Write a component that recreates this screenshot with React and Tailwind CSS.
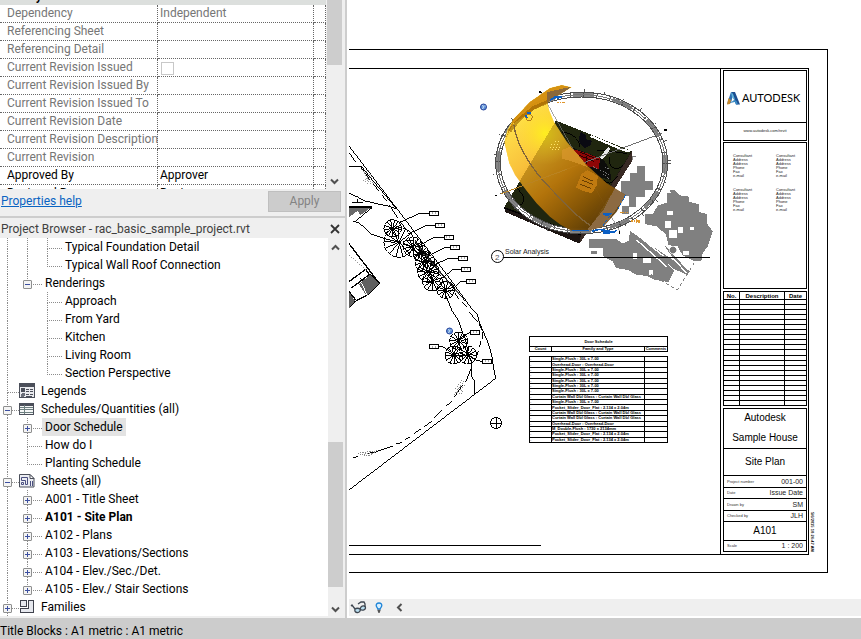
import React from "react";

const properties = [
  { name: "Dependency", value: "Independent" },
  { name: "Referencing Sheet", value: "" },
  { name: "Referencing Detail", value: "" },
  { name: "Current Revision Issued", check: true },
  { name: "Current Revision Issued By", value: "" },
  { name: "Current Revision Issued To", value: "" },
  { name: "Current Revision Date", value: "" },
  { name: "Current Revision Description", value: "" },
  { name: "Current Revision", value: "" },
  { name: "Approved By", value: "Approver", editable: true },
  { name: "Designed By", value: "Designer", editable: true },
];

// Guides, left to right: "v" line passes through, "t" branch, "l" last branch, "" empty.
const tree = [
  { label: "Typical Foundation Detail", guides: ["v", "v", "t"] },
  { label: "Typical Wall Roof Connection", guides: ["v", "v", "l"] },
  { label: "Renderings", guides: ["v", "l"], box: "minus" },
  { label: "Approach", guides: ["v", "", "t"] },
  { label: "From Yard", guides: ["v", "", "t"] },
  { label: "Kitchen", guides: ["v", "", "t"] },
  { label: "Living Room", guides: ["v", "", "t"] },
  { label: "Section Perspective", guides: ["v", "", "l"] },
  { label: "Legends", guides: ["t"], icon: "legend" },
  { label: "Schedules/Quantities (all)", guides: ["t"], box: "minus", icon: "schedule" },
  { label: "Door Schedule", guides: ["v", "t"], box: "plus", selected: true },
  { label: "How do I", guides: ["v", "t"] },
  { label: "Planting Schedule", guides: ["v", "l"] },
  { label: "Sheets (all)", guides: ["t"], box: "minus", icon: "sheet" },
  { label: "A001 - Title Sheet", guides: ["v", "t"], box: "plus" },
  { label: "A101 - Site Plan", guides: ["v", "t"], box: "plus", bold: true },
  { label: "A102 - Plans", guides: ["v", "t"], box: "plus" },
  { label: "A103 - Elevations/Sections", guides: ["v", "t"], box: "plus" },
  { label: "A104 - Elev./Sec./Det.", guides: ["v", "t"], box: "plus" },
  { label: "A105 - Elev./ Stair Sections", guides: ["v", "l"], box: "plus" },
  { label: "Families", guides: ["t"], box: "plus", icon: "family" },
];

const single = "Single-Flush : 30L x 7-00";
const overhead = "Overhead-Door : Overhead-Door";
const curtain = "Curtain Wall Dbl Glass : Curtain Wall Dbl Glass";
const pocket = "Pocket_Slider_Door_Flat : 2.134 x 2.04m";
const doors = [
  single, overhead, single, single, single, single, single, curtain,
  single, pocket, curtain, curtain, overhead, "M_Double-Flush : 1730 x 2134mm", pocket, pocket,
];

function Chevron({ d }) {
  return (
    <svg width="9" height="9" viewBox="0 0 9 9" fill="none" stroke="#505050" strokeWidth="2" aria-hidden="true">
      <path d={d} />
    </svg>
  );
}
const UP = "M1 6.5 4.5 3 8 6.5";
const DOWN = "M1 2.5 4.5 6 8 2.5";
const LEFT = "M6.5 1 3 4.5 6.5 8";

function TreeIcon({ kind }) {
  if (kind === "legend")
    return (
      <svg width="17" height="16" viewBox="0 0 17 16" aria-hidden="true" shapeRendering="crispEdges">
        <rect x=".5" y=".5" width="15" height="14" fill="#e9eaee" stroke="#4b4f5a" />
        <path d="M1 2.5h14" stroke="#4b4f5a" strokeWidth="3" />
        <rect x="2" y="5" width="4" height="4" fill="#4b4f5a" />
        <circle cx="4" cy="12" r="2" fill="#6b6f7a" />
        <path d="M7 6.5h3M11 6.5h3M7 8.500h3M11 8.500h3M7 11.500h3M11 11.500h3M7 13.500h6" stroke="#4b4f5a" />
      </svg>
    );
  if (kind === "schedule")
    return (
      <svg width="17" height="16" viewBox="0 0 17 16" aria-hidden="true" shapeRendering="crispEdges">
        <rect x=".5" y="2.500" width="14" height="11" fill="#f4f6f6" stroke="#4b4f5a" />
        <path d="M1 3.500h13" stroke="#4b4f5a" strokeWidth="2" />
        <path d="M1 6.500h13M1 8.500h13M1 11.500h13M5.500 4v9" stroke="#6d7f80" />
      </svg>
    );
  if (kind === "sheet")
    return (
      <svg width="17" height="16" viewBox="0 0 17 16" aria-hidden="true">
        <path d="M.5 1.500h10.500l4 4v8.500H.5z" fill="#eceef3" stroke="#4b4f5a" />
        <path d="M11 1.500v4h4z" fill="#fff" stroke="#4b4f5a" />
        <path d="M2.500 7.500v-3h6v7h-2v-4zM2.500 9.500h2v2h-2zM11.500 8v5M13.500 8v5" fill="none" stroke="#4a4f80" />
      </svg>
    );
  return (
    <svg width="17" height="16" viewBox="0 0 17 16" aria-hidden="true" shapeRendering="crispEdges">
      <path d="M1.500 1.500h6v6h-6zM9.500 1.500h5v12h-13v-4h8z" fill="#e6e8ee" stroke="#3f424d" />
    </svg>
  );
}

function Guide({ kind, last, box, root }) {
  const width = !last ? "w-[20px]" : root ? "w-[19px]" : "w-[22px]";
  const line = kind !== "";
  const branch = kind === "t" || kind === "l";
  return (
    <span className={`relative flex h-full shrink-0 flex-col pl-[7px] ${width}`}>
      <span
        className={`h-[11px] border-dotted border-[#8c8c8c] ${line ? "border-l" : ""} ${branch ? "border-b" : ""}`}
      />
      <span
        className={`flex-1 border-dotted border-[#8c8c8c] ${kind === "v" || kind === "t" ? "border-l" : ""}`}
      />
      {last && box && (
        <button
          type="button"
          aria-label={box === "plus" ? "Expand" : "Collapse"}
          className="absolute left-[3px] top-[6px] flex size-[9px] items-center justify-center rounded-[1px] border border-[#8e8f8f] bg-[#f4f4f4]"
        >
          <svg width="5" height="5" viewBox="0 0 5 5" stroke="#3c4fa0" shapeRendering="crispEdges">
            <path d={box === "plus" ? "M0 2.500h5M2.500 0v5" : "M0 2.500h5"} />
          </svg>
        </button>
      )}
    </span>
  );
}

function TreeRow({ item }) {
  const root = item.guides.length === 1;
  return (
    <li className="flex h-[18px] items-center">
      {item.guides.map((g, i) => (
        <Guide key={i} kind={g} last={i === item.guides.length - 1} box={item.box} root={root} />
      ))}
      {item.icon && <TreeIcon kind={item.icon} />}
      <span
        className={`h-full px-[3px] leading-[18px] whitespace-nowrap ${root ? "ml-[2px]" : ""} ${item.selected ? "bg-[#e3e3e3]" : ""} ${item.bold ? "font-bold" : ""}`}
      >
        {item.label}
      </span>
    </li>
  );
}

function PropertiesPanel() {
  return (
    <section className="bg-[#efefef]">
      <div className="flex h-[189px] overflow-hidden">
        <div className="min-w-0 flex-1 bg-white">
          <table className="-mt-[13px] w-full table-fixed border-separate border-spacing-0 text-[#767676]">
            <colgroup>
              <col className="w-[158px]" />
              <col />
              <col className="w-[12px]" />
            </colgroup>
            <thead>
              <tr className="h-[18px] bg-[#dcdfdd] text-left text-black">
                <th colSpan={3} className="p-0 pl-[1px] leading-[18px] font-bold">Identity Data</th>
              </tr>
            </thead>
            <tbody>
              {properties.map((p) => (
                <tr key={p.name} className={`h-[18px] ${p.editable ? "text-black" : ""}`}>
                  <th scope="row" className="border-r border-b border-dotted border-[#666] p-0 pl-[7px] text-left align-top leading-[16px] font-normal whitespace-nowrap">
                    {p.name}
                  </th>
                  <td className="border-r border-b border-dotted border-[#666] p-0 pl-[2px] align-top leading-[16px]">
                    {p.check ? (
                      <input
                        type="checkbox"
                        aria-label={p.name}
                        disabled
                        className="ml-px mt-[3px] block size-[13px] appearance-none border border-[#c8c8c8] bg-white"
                      />
                    ) : (
                      p.value
                    )}
                  </td>
                  <td className="border-r border-b border-dotted border-[#666] p-0" />
                </tr>
              ))}
            </tbody>
          </table>
        </div>
        <div className="ml-px mr-[3px] flex w-[15px] flex-col items-center justify-between">
          <div className="h-[65px] w-full bg-[#cdcdcd]" />
          <div className="pb-[3px]"><Chevron d={DOWN} /></div>
        </div>
      </div>
      <div className="flex items-start justify-between border-b-2 border-[#cdcdcd] pt-[2px] pr-[4px] pb-[4px] pl-px">
        <a href="#help" className="leading-[20px] text-[#0a64c2] underline">Properties help</a>
        <button type="button" className="h-[21px] w-[73px] border border-[#bfbfbf] bg-[#cccccc] leading-[19px] text-[#838383]">
          Apply
        </button>
      </div>
    </section>
  );
}

function ProjectBrowser() {
  return (
    <section className="flex flex-1 flex-col bg-[#efefef] pb-[2px]">
      <header className="flex h-[20px] items-center justify-between pt-px pr-[5px] pl-px text-[#404040]">
        <h2>Project Browser - rac_basic_sample_project.rvt</h2>
        <button type="button" aria-label="Close">
          <svg width="10" height="10" viewBox="0 0 10 10" stroke="#333" strokeWidth="1.800"><path d="M1 1l8 8M9 1 1 9" /></svg>
        </button>
      </header>
      <div className="flex flex-1">
        <ul className="min-w-0 flex-1 bg-white">
          {tree.map((item) => <TreeRow key={item.label} item={item} />)}
        </ul>
        <div className="mr-[2px] flex w-[15px] flex-col items-center pt-[5px] pb-[2px]">
          <Chevron d={UP} />
          <div className="mt-[190px] h-[145px] w-full bg-[#cdcdcd]" />
          <div className="mt-auto"><Chevron d={DOWN} /></div>
        </div>
      </div>
    </section>
  );
}

function Tree({ x, y, r, turn = 0 }) {
  const spokes = Array.from({ length: 13 }, (_, i) => {
    const a = turn + (i * Math.PI * 2) / 13;
    const k = i % 3 === 0 ? 0.25 : 0;
    return `M${x + Math.cos(a) * r * k} ${y + Math.sin(a) * r * k}L${x + Math.cos(a + 0.12) * r} ${y + Math.sin(a + 0.12) * r}`;
  }).join("");
  return (
    <g fill="none" stroke="#000" strokeWidth="3">
      <circle cx={x} cy={y} r={r} strokeDasharray="13 3" />
      <path d={spokes} />
      <circle cx={x} cy={y} r="4" fill="#000" />
    </g>
  );
}

function Tag({ x, y, to }) {
  const left = to[0][0] < x;
  const start = left ? x - 14 : x + 14;
  return (
    <g fill="none" stroke="#000" strokeWidth="3">
      <rect x={x - 13} y={y - 6} width="27" height="12" fill="#fff" />
      <path d={`M${x - 5} ${y - 3}v6M${x + 4} ${y - 3}v6`} stroke="#aaa" />
      <path d={`M${start} ${y}L${to.map((p) => p.join(" ")).join("L")}`} />
    </g>
  );
}

function Globe({ x, y }) {
  return (
    <g>
      <circle cx={x} cy={y} r="3" fill="#5c8fd6" stroke="#27449a" />
      <path d={`M${x - 1} ${y - 2}l1 2-1 2M${x + 1} ${y - 1}h1`} stroke="#cfe6f8" fill="none" />
    </g>
  );
}

function SitePlan() {
  return (
    <g shapeRendering="crispEdges">
      <g transform="translate(345 130) scale(.33333)" fill="none" stroke="#000" strokeWidth="3">
        <path d="M12 48 155 235 310 440 383 540 396 552 405 582 417 610 430 640 440 675 446 715 452 745 12 1080" />
        <path d="M14 70 32 96M48 112 75 150M84 160 100 182M110 194 126 214M134 226 158 264M166 276 190 306M330 490 342 508M350 516 364 530M372 546 398 576M402 582 412 602M413 606 411 628M408 634 403 652M400 664 394 680M380 712 362 756M352 766 328 802M322 812 304 828M290 840 268 864M262 872 236 892M228 896 206 912M196 920 180 928M170 938 154 942M144 948 92 966M40 978 24 984" />
        <path d="M92 966 70 970M12 110H50L78 145 155 237M12 190 36 200 60 213 100 222 130 228 155 237M20 218H54M38 206V216M24 274 40 278 56 290 78 312 120 326 160 336" />
        <path d="M300 490 312 520 320 540 342 575 350 602 362 630 370 670 378 692 380 740 388 752V792" />
        <path d="M12 232H82L26 278" />
        <path d="M20 234H76L46 256 38 242 12 262V234Z" fill="#6a6a6a" stroke="none" />
        <path d="M12 230H82" strokeWidth="5" />
        <path d="M12 341 103 460 64 497 34 512 12 532M12 455 62 418 72 432M12 485 32 510M103 460 75 432 30 466 18 474M46 444 54 456 58 452" strokeWidth="4" />
        <path d="M75 433 103 460 64 497 42 464Z M12 486 30 512 12 535Z" fill="#606060" stroke="none" />
        <path d="M50 460 66 495M34 470 20 480" stroke="#fff" />
        <path d="M12 375 62 418" stroke="#999" strokeDasharray="3 5" />
        <path d="M210 330 290 430 360 512 300 445 226 362Z" fill="#4a4a4a" strokeWidth="2" />
        <path d="M50 118 72 150 90 165M56 130l16-8M60 138l18-6M64 146l18-6M54 150l16 12M60 146l18 16" stroke="#999" strokeDasharray="4 3" />
        <path d="M326 796 360 750M334 786l16 6M340 776l14 8M344 768l14 8M350 760l10 6M332 776l20-28" stroke="#888" strokeDasharray="4 3" />
        <path d="M38 970 96 962M56 978 84 974M44 974 94 968" stroke="#888" strokeDasharray="4 3" />
        <Tree x={143} y={295} r={26} />
        <Tree x={162} y={337} r={45} turn={0.2} />
        <Tree x={203} y={350} r={29} turn={0.4} />
        <Tree x={228} y={370} r={24} />
        <Tree x={240} y={395} r={30} turn={0.3} />
        <Tree x={250} y={425} r={32} turn={0.1} />
        <Tree x={262} y={453} r={30} turn={0.5} />
        <Tree x={302} y={480} r={26} />
        <Tree x={341} y={633} r={27} turn={0.2} />
        <Tree x={327} y={675} r={27} />
        <Tree x={368} y={675} r={27} turn={0.4} />
        <Tag x={267} y={250} to={[[224, 250], [162, 278]]} />
        <Tag x={286} y={286} to={[[244, 286], [190, 312]]} />
        <Tag x={311} y={322} to={[[264, 324], [216, 350]]} />
        <Tag x={330} y={352} to={[[300, 352], [240, 384]]} />
        <Tag x={354} y={385} to={[[312, 385], [254, 410]]} />
        <Tag x={364} y={418} to={[[324, 418], [278, 456]]} />
        <Tag x={378} y={454} to={[[348, 454], [316, 484]]} />
        <Tag x={391} y={607} to={[[374, 607], [344, 626]]} />
        <Tag x={268} y={651} to={[[294, 651], [324, 670]]} />
        <Tag x={427} y={694} to={[[396, 692], [372, 678]]} />
      </g>
      <path d="M490.500 423.500h11M496.500 418v11" stroke="#000" />
      <circle cx="496" cy="423" r="5.500" fill="none" stroke="#000" />
      <path d="M349 545.500h192" stroke="#000" />
    </g>
  );
}

function SolarStudy() {
  return (
    <g shapeRendering="crispEdges">
      <defs>
        <linearGradient id="sky" gradientUnits="userSpaceOnUse" x1="150" y1="150" x2="400" y2="450">
          <stop offset="0" stopColor="#ffdc3c" />
          <stop offset=".3" stopColor="#f8bb2c" />
          <stop offset=".55" stopColor="#dc8e10" />
          <stop offset=".8" stopColor="#9a6208" />
          <stop offset="1" stopColor="#5c3c08" />
        </linearGradient>
        <radialGradient id="sun" gradientUnits="userSpaceOnUse" cx="225" cy="190" r="95">
          <stop offset="0" stopColor="#fff01e" stopOpacity=".95" />
          <stop offset="1" stopColor="#ffd830" stopOpacity="0" />
        </radialGradient>
        <clipPath id="dome">
          <path d="M103 215 112 180 130 148 180 95 240 54 275 45 305 52 262 78 232 98 238 122 252 156 290 215 350 285 410 340 467 375 440 425 400 470 360 480 305 482 272 464 240 440 200 400 170 362 135 315 118 280Z" />
        </clipPath>
      </defs>
      <g transform="translate(470 70) scale(.33333)">
        <g fill="#808080">
          <path d="M500 288h24v46h26v26h-26v22h-26v28h-22v-32h-22v-44h26v-26h20zM455 408h22v24h-22zM484 258h14v4h-10v8h-6z" />
          <path d="M598 360h16l16 16 26 4v14l32 10v22l22 6v28l18 24-14 44-16 22-4 22-20 2-36-18-16-28-26-2-8-32-26-24-38-8v-30h24l16-26 28-8v-30h12z" />
          <path d="M358 506h78l22 14 18-8 4-28 36 28 30 28 22 18 44 44-16 34-40-6-26-12-32-4-24-14-36-6-10-20-30-16v-24h-40zM362 544h20v8h-20z" />
          <path d="M478 482 660 604l-10 10-40-18zM580 520l72 80-24 2z" />
        </g>
        <path d="M536 480h28v28h-28zM584 452h20v22h-20zM598 480h24v24h-24zM624 470h16v20h-16zM520 560h24v18h-24zM488 548h14v20h-14zM592 424h16v12h-16zM640 544h18v12h-18zM536 600h14v14h-14zM570 500l14 12-6 8-12-10zM660 470h12v10h-12z" fill="#fff" />
        <path d="M600 536h20M596 542h16M508 500l72 58M500 510l90 80M560 510l90 100" stroke="#fff" strokeWidth="4" />
        <circle cx="609" cy="540" r="11" fill="#777" stroke="#fff" strokeWidth="2" />
        <path d="M480 576 622 660 652 612 712 516" fill="none" stroke="#808080" strokeWidth="3" strokeDasharray="10 8" />

        <path d="M103 413 258 152 485 243 487 272 328 521 105 426Z" fill="#1d1512" />
        <path d="M103 411 258 152 485 243 332 492Z" fill="#20260f" />
        <path d="M485 246 487 272 330 520 332 494Z" fill="#382a24" />
        <path d="M103 414 332 494" stroke="#000" strokeWidth="4" />
        <path d="M120 390c30 30 44 10 40-8s-20-20-16-34M270 190c30-10 60 20 60 40M380 240c40 0 70 10 90 10M420 260c-10 30 20 50 40 24M400 330c20 20 30 4 44-12" fill="none" stroke="#000" strokeWidth="3" />
        <path d="M362 198 460 240 480 244" stroke="#fff" strokeWidth="7" />
        <path d="M418 234 390 270" stroke="#e8e8e8" strokeWidth="10" />
        <path d="M332 186l14 8 4 14 16 4-4 14-18 8-14-12-4-16z" fill="#0a0a12" />
        <path d="M300 230 400 268 420 300 424 330 380 320 330 280Z" fill="#0d0d0b" />
        <path d="M304 236 352 250 390 266 386 298 340 284 318 264Z" fill="#8e0606" />
        <path d="M322 254l50 20M330 246l56 24M350 258v24" stroke="#2a0000" strokeWidth="3" />
        <path d="M370 290l14 8M390 300l26 14M398 310l22 18M404 290l14 8" stroke="#777" strokeWidth="3" strokeDasharray="5 4" />
        <path d="M92 372 575 190" stroke="#6f6f6f" strokeWidth="3" />
        <path d="M212 66 450 486" stroke="#777" strokeWidth="2" />

        <g fill="none">
          <ellipse cx="335" cy="279" rx="251" ry="205" stroke="#4c4c4c" strokeWidth="17" />
          <ellipse cx="335" cy="279" rx="251" ry="205" stroke="#fff" strokeWidth="11" />
          <ellipse cx="335" cy="279" rx="251" ry="205" stroke="#858585" strokeWidth="11" strokeDasharray="62 58" strokeDashoffset="30" />
          <ellipse cx="335" cy="279" rx="251" ry="205" stroke="#4c4c4c" strokeWidth="14" strokeDasharray="3 37" />
          <ellipse cx="335" cy="279" rx="251" ry="205" stroke="#777" strokeWidth="3" />
          <ellipse cx="335" cy="279" rx="263" ry="217" stroke="#555" strokeWidth="10" strokeDasharray="2 58" />
        </g>

        <g clipPath="url(#dome)">
          <path d="M90 40H480V500H90Z" fill="url(#sky)" opacity=".93" />
          <path d="M90 40H480V500H90Z" fill="url(#sun)" />
          <path d="M103 215 130 148 180 95 240 54 275 45 305 52 232 70 232 98 190 120 130 160Z" fill="#c87800" opacity=".75" />
          <path d="M258 152 100 415 345 500 470 375Z" fill="#6b4600" opacity=".28" />
          <path d="M232 66 305 50 262 80 232 98Z" fill="#8b683a" />
          <path d="M434 356 470 374 400 472 350 482 400 420Z" fill="#8c6a42" />
          <path d="M103 215 120 290" stroke="#ffd040" strokeWidth="6" />
        </g>
        <g fill="none">
          <path d="M118 184 150 146 190 114 232 96" stroke="#9a6200" strokeWidth="11" opacity=".6" />
          <path d="M132 166c6 60 60 140 110 190s60 70 118 110" stroke="#80643a" strokeWidth="4" />
          <path d="M92 372 290 298" stroke="#b98322" strokeWidth="3" />
        </g>
        <path d="M276 240 300 230 316 246 336 268 350 290 300 272 276 266Z" fill="#d7962a" opacity=".8" />
        <path d="M334 312 352 300 384 318 380 346 366 370 336 362 318 352Z" fill="#c07a10" />
        <path d="M340 320l30 14M336 330l34 14M330 342l34 14" stroke="#6b3f00" strokeWidth="3" />
        <path d="M242 224h26M240 232h30M246 240h28M254 216h18" stroke="#ffe46a" strokeWidth="3" strokeDasharray="3 6" />
        <circle cx="177" cy="142" r="10" fill="none" stroke="#b37a18" strokeWidth="3" />
        <path d="M166 134l6 10M172 130h10M240 90l16-8 8 2 12-4M252 82h22M306 482h50M366 484l20-6 46 8 8-6M400 486h34M400 490h20M400 432h24M404 436h14" fill="none" stroke="#0b5fc4" strokeWidth="5" />
        <path d="M426 428 396 472M466 376 440 424" fill="none" stroke="#0b5fc4" strokeWidth="3" strokeDasharray="8 5" />
        <path d="M262 98h22M450 428h24M484 454h28M500 448v10M508 450v8" stroke="#e0962c" strokeWidth="5" strokeDasharray="5 2" />
        <path d="M207 66h4l4 4M583 176v8M590 176v8M584 180h6M76 376h6M448 484v8" fill="none" stroke="#000" strokeWidth="4" />
        <path d="M100 562H720" stroke="#000" strokeWidth="4" />
      </g>
      <circle cx="497.500" cy="256.500" r="6" fill="#fff" stroke="#000" shapeRendering="auto" />
      <text x="495" y="260" fontSize="8" fill="#555">2</text>
      <text x="505" y="254" fontSize="7" fill="#222">Solar Analysis</text>
    </g>
  );
}

function DoorSchedule() {
  return (
    <table className="absolute top-[267px] left-[180px] h-[107px] w-[139px] table-fixed border-collapse text-[4px] leading-[4px] text-black">
      <colgroup>
        <col className="w-[22px]" />
        <col />
        <col className="w-[23px]" />
      </colgroup>
      <thead>
        <tr className="h-[10px]"><th colSpan={3} className="border border-black p-0">Door Schedule</th></tr>
        <tr className="h-[5px]">
          <th className="border border-black p-0">Count</th>
          <th className="border border-black p-0">Family and Type</th>
          <th className="border border-black p-0">Comments</th>
        </tr>
        <tr className="h-[5px]"><td colSpan={3} className="p-0" /></tr>
      </thead>
      <tbody>
        {doors.map((d, i) => (
          <tr key={i}>
            <td className="border border-black p-0">-</td>
            <td className="border border-black p-0 font-bold whitespace-nowrap">{d}</td>
            <td className="border border-black p-0" />
          </tr>
        ))}
      </tbody>
    </table>
  );
}

function Consultant() {
  return (
    <address className="text-[4px] leading-[4px] text-[#222] not-italic">
      {["Consultant", "Address", "Address", "Phone", "Fax", "e-mail"].map((l, i) => <div key={i}>{l}</div>)}
    </address>
  );
}

function Field({ label, value, className }) {
  return (
    <div className={`flex items-center justify-between border-t border-black px-[3px] ${className}`}>
      <dt className="text-[4px] text-[#333]">{label}</dt>
      <dd className="text-[7px] leading-[8px] text-[#222]">{value}</dd>
    </div>
  );
}

function TitleBlock() {
  return (
    <aside className="w-[88px] border-l border-black pt-px pr-px pl-[2px] text-black">
      <div className="h-[71px] border border-black">
        <div className="flex h-[52px] items-center gap-[2px] border-b border-black pt-[3px] pl-[3px]">
          <svg width="13" height="13" viewBox="0 0 13 13" aria-hidden="true">
            <path d="M0 12 4 0 6 3 4 11Z" fill="#2f6fb0" />
            <path d="M0 12.500 1.500 6 4 8 3 12Z" fill="#c98a2b" />
            <path d="M4 0H8L13 12.500H9L5.500 4Z" fill="#1c4f91" />
            <path d="M4 0 6 2 8.500 9 5 5Z" fill="#5fb4dc" />
            <path d="M3 11 7 8 9.500 9 11 12.500H9L8 10Z" fill="#3a8cc6" />
          </svg>
          <span className="font-[Lato] text-[11px] leading-[12px] text-black">AUTODESK</span>
        </div>
        <p className="pt-[5px] text-center text-[4px] leading-[6px] text-[#222]">www.autodesk.com/revit</p>
      </div>
      <div className="mt-px grid h-[147px] grid-cols-[43px_1fr] content-start gap-y-[10px] border border-black pt-[11px] pl-[9px]">
        <Consultant /><Consultant /><Consultant /><Consultant />
      </div>
      <table className="mt-[2px] h-[115px] w-full table-fixed border-collapse text-[6px] leading-[6px]">
        <colgroup>
          <col className="w-[16px]" />
          <col />
          <col className="w-[22px]" />
        </colgroup>
        <thead>
          <tr className="h-[8px]">
            {["No.", "Description", "Date"].map((h) => <th key={h} className="border border-black p-0">{h}</th>)}
          </tr>
        </thead>
        <tbody>
          {Array.from({ length: 21 }, (_, i) => (
            <tr key={i}>
              <td className="border border-black p-0" />
              <td className="border border-black p-0" />
              <td className="border border-black p-0" />
            </tr>
          ))}
        </tbody>
      </table>
      <div className="mt-[2px] border border-black text-center text-[10px]">
        <p className="pt-[2px] leading-[13px]">Autodesk</p>
        <p className="pt-[8px] pb-[4px] leading-[12px]">Sample House</p>
        <p className="border-t border-black leading-[26px]">Site Plan</p>
        <dl>
          <Field label="Project number" value="001-00" className="h-[12px]" />
          <Field label="Date" value="Issue Date" className="h-[11px]" />
          <Field label="Drawn by" value="SM" className="h-[12px]" />
          <Field label="Checked by" value="JLH" className="h-[11px]" />
        </dl>
        <p className="border-t border-black leading-[18px]">A101</p>
        <dl><Field label="Scale" value="1 : 200" className="h-[11px]" /></dl>
      </div>
    </aside>
  );
}

function SheetView() {
  return (
    <main className="flex min-w-0 flex-1 flex-col bg-white pl-[2px]">
      <div className="relative mt-[49px] mr-[33px] h-[524px] border-y border-r border-black pt-[18px] pr-[18px] font-['Liberation_Sans',sans-serif]">
        <div className="flex h-[487px] border-y border-r border-black">
          <div className="relative flex-1 overflow-hidden">
            <svg width="371" height="485" viewBox="349 69 371 485" role="img" aria-label="Site plan and solar analysis">
              <SitePlan />
              <SolarStudy />
              <Globe x={483.5} y={107} />
              <Globe x={449.5} y={331} />
            </svg>
            <DoorSchedule />
          </div>
          <TitleBlock />
        </div>
        <span className="absolute right-[12px] bottom-[20px] text-[4px] leading-[5px] font-bold whitespace-nowrap [writing-mode:vertical-rl]">
          5/6/2015 10:26:47 AM
        </span>
      </div>
      <div className="mt-auto mb-[2px] flex h-[17px] items-center bg-[#efefef] pl-px">
        <button type="button" aria-label="Temporary hide or isolate">
          <svg width="17" height="13" viewBox="0 0 17 13" fill="none" stroke="#3e4650" strokeWidth="1.300">
            <path d="M1 5 2 4l3 4M8 3l3-2h3l1 2v2" />
            <path d="M5 8c1-1 4-1 5 0 1 2-1 4-3 3.500S4.500 10 5 8ZM11 6c2-2 5-1 4.500 1S13 9.500 11.500 9 10 7.500 11 6Z" fill="#b9def0" />
          </svg>
        </button>
        <button type="button" aria-label="Reveal hidden elements" className="ml-[8px]">
          <svg width="8" height="11" viewBox="0 0 8 11" fill="none">
            <path d="M4 1C2 1 1.200 2.200 1.200 3.600 1.200 5 2.600 5.500 2.800 7h2.400C5.400 5.500 6.800 5 6.800 3.600 6.800 2.200 6 1 4 1Z" fill="#d9f0ff" stroke="#1d84d8" strokeWidth="1.300" />
            <path d="M2.500 8.500h3M3 10h2" stroke="#555" strokeWidth="1.400" />
          </svg>
        </button>
        <button type="button" aria-label="Scroll left" className="ml-[12px]"><Chevron d={LEFT} /></button>
      </div>
    </main>
  );
}

export default function App() {
  return (
    <div className="flex min-h-screen flex-col bg-[#cccccc] font-[Roboto,'Noto_Sans',sans-serif] text-[12px] text-black">
      <div className="flex">
        <div className="flex w-[347px] shrink-0 flex-col border-r-2 border-[#cdcdcd]">
          <PropertiesPanel />
          <ProjectBrowser />
        </div>
        <SheetView />
      </div>
      <footer className="flex flex-1 items-center pt-[4px] leading-[16px] whitespace-nowrap">Title Blocks : A1 metric : A1 metric</footer>
    </div>
  );
}
